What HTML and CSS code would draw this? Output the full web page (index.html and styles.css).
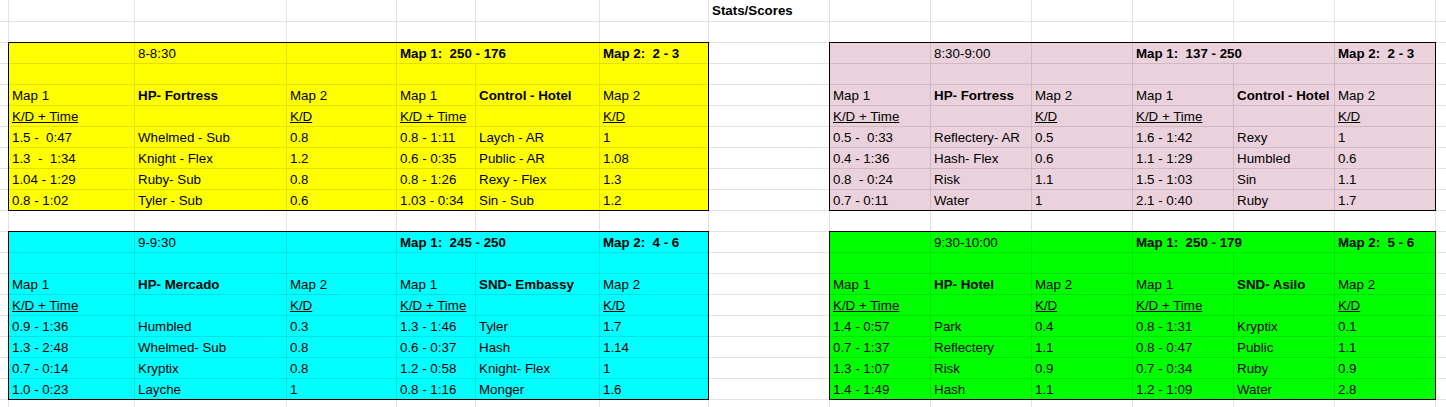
FILE: index.html
```html
<!DOCTYPE html>
<html>
<head>
<meta charset="utf-8">
<title>Stats/Scores</title>
<link rel="stylesheet" href="styles.css">
</head>
<body>
<div class="sheet">
  <div class="c title">Stats/Scores</div>

  <div class="box yellow b1">
    <div class="c"></div><div class="c">8-8:30</div><div class="c"></div><div class="c span2 b">Map 1:  250 - 176</div><div class="c b">Map 2:  2 - 3</div>
    <div class="c"></div><div class="c"></div><div class="c"></div><div class="c"></div><div class="c"></div><div class="c"></div>
    <div class="c">Map 1</div><div class="c b">HP- Fortress</div><div class="c">Map 2</div><div class="c">Map 1</div><div class="c b">Control - Hotel</div><div class="c">Map 2</div>
    <div class="c"><u>K/D + Time</u></div><div class="c"></div><div class="c"><u>K/D</u></div><div class="c"><u>K/D + Time</u></div><div class="c"></div><div class="c"><u>K/D</u></div>
    <div class="c">1.5 -  0:47</div><div class="c">Whelmed - Sub</div><div class="c">0.8</div><div class="c">0.8 - 1:11</div><div class="c">Laych - AR</div><div class="c">1</div>
    <div class="c">1.3  -  1:34</div><div class="c">Knight - Flex</div><div class="c">1.2</div><div class="c">0.6 - 0:35</div><div class="c">Public - AR</div><div class="c">1.08</div>
    <div class="c">1.04 - 1:29</div><div class="c">Ruby- Sub</div><div class="c">0.8</div><div class="c">0.8 - 1:26</div><div class="c">Rexy - Flex</div><div class="c">1.3</div>
    <div class="c">0.8 - 1:02</div><div class="c">Tyler - Sub</div><div class="c">0.6</div><div class="c">1.03 - 0:34</div><div class="c">Sin - Sub</div><div class="c">1.2</div>
  </div>

  <div class="box pink b2">
    <div class="c"></div><div class="c">8:30-9:00</div><div class="c"></div><div class="c span2 b">Map 1:  137 - 250</div><div class="c b">Map 2:  2 - 3</div>
    <div class="c"></div><div class="c"></div><div class="c"></div><div class="c"></div><div class="c"></div><div class="c"></div>
    <div class="c">Map 1</div><div class="c b">HP- Fortress</div><div class="c">Map 2</div><div class="c">Map 1</div><div class="c b">Control - Hotel</div><div class="c">Map 2</div>
    <div class="c"><u>K/D + Time</u></div><div class="c"></div><div class="c"><u>K/D</u></div><div class="c"><u>K/D + Time</u></div><div class="c"></div><div class="c"><u>K/D</u></div>
    <div class="c">0.5 -  0:33</div><div class="c">Reflectery- AR</div><div class="c">0.5</div><div class="c">1.6 - 1:42</div><div class="c">Rexy</div><div class="c">1</div>
    <div class="c">0.4 - 1:36</div><div class="c">Hash- Flex</div><div class="c">0.6</div><div class="c">1.1 - 1:29</div><div class="c">Humbled</div><div class="c">0.6</div>
    <div class="c">0.8  - 0:24</div><div class="c">Risk</div><div class="c">1.1</div><div class="c">1.5 - 1:03</div><div class="c">Sin</div><div class="c">1.1</div>
    <div class="c">0.7 - 0:11</div><div class="c">Water</div><div class="c">1</div><div class="c">2.1 - 0:40</div><div class="c">Ruby</div><div class="c">1.7</div>
  </div>

  <div class="box cyan b3">
    <div class="c"></div><div class="c">9-9:30</div><div class="c"></div><div class="c span2 b">Map 1:  245 - 250</div><div class="c b">Map 2:  4 - 6</div>
    <div class="c"></div><div class="c"></div><div class="c"></div><div class="c"></div><div class="c"></div><div class="c"></div>
    <div class="c">Map 1</div><div class="c b">HP- Mercado</div><div class="c">Map 2</div><div class="c">Map 1</div><div class="c b">SND- Embassy</div><div class="c">Map 2</div>
    <div class="c"><u>K/D + Time</u></div><div class="c"></div><div class="c"><u>K/D</u></div><div class="c"><u>K/D + Time</u></div><div class="c"></div><div class="c"><u>K/D</u></div>
    <div class="c">0.9 - 1:36</div><div class="c">Humbled</div><div class="c">0.3</div><div class="c">1.3 - 1:46</div><div class="c">Tyler</div><div class="c">1.7</div>
    <div class="c">1.3 - 2:48</div><div class="c">Whelmed- Sub</div><div class="c">0.8</div><div class="c">0.6 - 0:37</div><div class="c">Hash</div><div class="c">1.14</div>
    <div class="c">0.7 - 0:14</div><div class="c">Kryptix</div><div class="c">0.8</div><div class="c">1.2 - 0:58</div><div class="c">Knight- Flex</div><div class="c">1</div>
    <div class="c">1.0 - 0:23</div><div class="c">Layche</div><div class="c">1</div><div class="c">0.8 - 1:16</div><div class="c">Monger</div><div class="c">1.6</div>
  </div>

  <div class="box green b4">
    <div class="c"></div><div class="c">9:30-10:00</div><div class="c"></div><div class="c span2 b">Map 1:  250 - 179</div><div class="c b">Map 2:  5 - 6</div>
    <div class="c"></div><div class="c"></div><div class="c"></div><div class="c"></div><div class="c"></div><div class="c"></div>
    <div class="c">Map 1</div><div class="c b">HP- Hotel</div><div class="c">Map 2</div><div class="c">Map 1</div><div class="c b">SND- Asilo</div><div class="c">Map 2</div>
    <div class="c"><u>K/D + Time</u></div><div class="c"></div><div class="c"><u>K/D</u></div><div class="c"><u>K/D + Time</u></div><div class="c"></div><div class="c"><u>K/D</u></div>
    <div class="c">1.4 - 0:57</div><div class="c">Park</div><div class="c">0.4</div><div class="c">0.8 - 1:31</div><div class="c">Kryptix</div><div class="c">0.1</div>
    <div class="c">0.7 - 1:37</div><div class="c">Reflectery</div><div class="c">1.1</div><div class="c">0.8 - 0:47</div><div class="c">Public</div><div class="c">1.1</div>
    <div class="c">1.3 - 1:07</div><div class="c">Risk</div><div class="c">0.9</div><div class="c">0.7 - 0:34</div><div class="c">Ruby</div><div class="c">0.9</div>
    <div class="c">1.4 - 1:49</div><div class="c">Hash</div><div class="c">1.1</div><div class="c">1.2 - 1:09</div><div class="c">Water</div><div class="c">2.8</div>
  </div>
</div>
</body>
</html>
```

FILE: styles.css
```css
* { box-sizing: border-box; }

html, body {
  margin: 0;
  padding: 0;
  background: #fff;
  overflow: hidden;
}

body {
  width: 1446px;
  height: 407px;
  font-family: "Liberation Sans", Arial, sans-serif;
  font-size: 13.333px;
  color: #000;
}

.sheet {
  --gl: #e2e2e2;
  display: grid;
  grid-template-columns: 8px 126px 152px 110px 79px 124px 109px 121px repeat(6, 101px) 1fr;
  grid-template-rows: repeat(20, 21px);
  width: 1446px;
  height: 420px;
  background-color: #fff;
  background-image:
    repeating-linear-gradient(to bottom, var(--gl) 0 1px, transparent 1px 21px),
    linear-gradient(var(--gl), var(--gl)),
    linear-gradient(var(--gl), var(--gl)),
    linear-gradient(var(--gl), var(--gl)),
    linear-gradient(var(--gl), var(--gl)),
    linear-gradient(var(--gl), var(--gl)),
    linear-gradient(var(--gl), var(--gl)),
    linear-gradient(var(--gl), var(--gl)),
    linear-gradient(var(--gl), var(--gl)),
    linear-gradient(var(--gl), var(--gl)),
    linear-gradient(var(--gl), var(--gl)),
    linear-gradient(var(--gl), var(--gl)),
    linear-gradient(var(--gl), var(--gl)),
    linear-gradient(var(--gl), var(--gl)),
    linear-gradient(var(--gl), var(--gl));
  background-repeat: no-repeat;
  background-size:
    100% calc(100% - 21px),
    1px 100%, 1px 100%, 1px 100%, 1px 100%, 1px 100%, 1px 100%, 1px 100%,
    1px 100%, 1px 100%, 1px 100%, 1px 100%, 1px 100%, 1px 100%, 1px 100%;
  background-position:
    0 21px,
    8px 0, 134px 0, 286px 0, 396px 0, 475px 0, 599px 0, 708px 0,
    829px 0, 930px 0, 1031px 0, 1132px 0, 1233px 0, 1334px 0, 1435px 0;
}

.c {
  display: flex;
  align-items: flex-end;
  padding: 0 2px 2px 3px;
  line-height: 15px;
  white-space: pre;
  overflow: hidden;
  min-width: 0;
}

.title {
  grid-column: 8;
  grid-row: 1;
  padding: 0 3px 3px 4px;
  font-weight: bold;
}

.b { font-weight: bold; }
.span2 { grid-column: span 2; }

u {
  text-decoration: underline;
  text-underline-offset: 1px;
}

.box {
  display: grid;
  grid-template-rows: 20px repeat(7, 20px);
  gap: 1px;
  border: 1px solid #000;
  margin-right: -1px;
  margin-bottom: -1px;
  background: linear-gradient(rgba(0, 0, 0, 0.114), rgba(0, 0, 0, 0.114)), var(--fill);
}

.box > .c { background: var(--fill); }

.b1, .b3 { grid-template-columns: 125px 151px 109px 78px 123px 108px; grid-column: 2 / 8; }
.b2, .b4 { grid-template-columns: 100px repeat(5, 100px); grid-column: 9 / 15; }
.b1, .b2 { grid-row: 3 / 11; }
.b3, .b4 { grid-row: 12 / 20; }

.yellow { --fill: #ffff00; }
.pink { --fill: #ead1dc; }
.cyan { --fill: #00ffff; }
.green { --fill: #00ff00; }
```
